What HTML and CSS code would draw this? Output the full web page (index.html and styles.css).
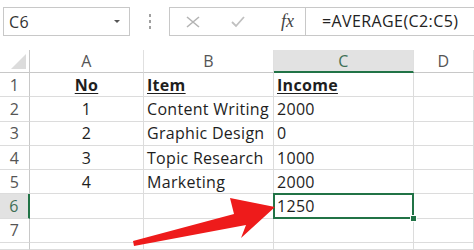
FILE: index.html
```html
<!DOCTYPE html>
<html lang="en">
<head>
  <meta charset="UTF-8">
  <meta name="viewport" content="width=device-width, initial-scale=1.0">
  <title>AVERAGE example</title>
  <link rel="stylesheet" href="styles.css">
</head>
<body>
  <div class="toolbar">
    <div class="name-box">
      <span>C6</span>
      <span class="caret"></span>
    </div>
    <div class="dots"><i></i><i></i><i></i></div>
    <div class="formula-wrap">
      <div class="buttons">
        <svg class="btn-x" width="16" height="12" viewBox="0 0 16 12">
          <path d="M2 1 L14 11 M14 1 L2 11" stroke="#b4b4b4" stroke-width="1.6" fill="none"/>
        </svg>
        <svg class="btn-ok" width="14" height="12" viewBox="0 0 14 12">
          <path d="M1 6 L5 10 L13 1" stroke="#c0c0c0" stroke-width="1.8" fill="none"/>
        </svg>
        <span class="fx">fx</span>
      </div>
      <div class="formula">=AVERAGE(C2:C5)</div>
    </div>
  </div>

  <div class="sheet">
    <div class="corner"><span class="tri"></span></div>
    <div class="col-head">A</div>
    <div class="col-head">B</div>
    <div class="col-head selected">C</div>
    <div class="col-head">D</div>

    <div class="row-head">1</div>
    <div class="cell center head">No</div>
    <div class="cell head">Item</div>
    <div class="cell head">Income</div>
    <div class="cell"></div>

    <div class="row-head">2</div>
    <div class="cell center">1</div>
    <div class="cell">Content Writing</div>
    <div class="cell">2000</div>
    <div class="cell"></div>

    <div class="row-head">3</div>
    <div class="cell center">2</div>
    <div class="cell">Graphic Design</div>
    <div class="cell">0</div>
    <div class="cell"></div>

    <div class="row-head">4</div>
    <div class="cell center">3</div>
    <div class="cell">Topic Research</div>
    <div class="cell">1000</div>
    <div class="cell"></div>

    <div class="row-head">5</div>
    <div class="cell center">4</div>
    <div class="cell">Marketing</div>
    <div class="cell">2000</div>
    <div class="cell"></div>

    <div class="row-head selected">6</div>
    <div class="cell"></div>
    <div class="cell"></div>
    <div class="cell active">1250<span class="handle"></span></div>
    <div class="cell"></div>

    <div class="row-head">7</div>
    <div class="cell"></div>
    <div class="cell"></div>
    <div class="cell"></div>
    <div class="cell"></div>

    <div class="row-head"></div>
    <div class="cell"></div>
    <div class="cell"></div>
    <div class="cell"></div>
    <div class="cell"></div>
  </div>

  <svg class="arrow" width="160" height="56" viewBox="0 0 160 56">
    <path d="M142 13 L97 4 L101 20 L0 47 L1 52 L113 31 L108 44 Z" fill="#ee1b1b"/>
  </svg>
</body>
</html>
```

FILE: styles.css
```css
body {
  margin: 0;
  font-family: "Open Sans", "Liberation Sans", sans-serif;
  background: #fff;
  color: #222;
  overflow: hidden;
  position: relative;
  width: 474px;
  height: 250px;
}
.toolbar {
  display: flex;
  align-items: flex-start;
  height: 50px;
  padding-top: 7px;
  box-sizing: border-box;
}
.name-box {
  margin-left: 3px;
  width: 127px;
  height: 29px;
  border: 1px solid #c8c8c8;
  box-sizing: border-box;
  display: flex;
  align-items: center;
  justify-content: space-between;
  padding: 0 9px 0 5px;
  font-size: 16px;
  letter-spacing: 0.3px;
  color: #333;
}
.caret {
  width: 0;
  height: 0;
  border-left: 3px solid transparent;
  border-right: 3px solid transparent;
  border-top: 3px solid #555;
}
.dots {
  width: 39px;
  display: flex;
  flex-direction: column;
  align-items: center;
  gap: 3px;
  padding-top: 7px;
}
.dots i {
  width: 2px;
  height: 3px;
  background: #a0a0a0;
}
.formula-wrap {
  flex: 1;
  display: flex;
  height: 29px;
  border: 1px solid #c8c8c8;
  border-right: none;
  box-sizing: border-box;
}
.buttons {
  width: 136px;
  display: flex;
  align-items: center;
  border-right: 1px solid #c8c8c8;
  box-sizing: border-box;
}
.btn-x { margin-left: 15px; }
.btn-ok { margin-left: 30px; }
.fx {
  margin-left: 36px;
  font-family: "Liberation Serif", serif;
  font-style: italic;
  font-size: 18px;
  color: #444;
}
.formula {
  padding-left: 16px;
  font-size: 16px;
  letter-spacing: 0.4px;
  line-height: 27px;
  color: #222;
}
.sheet {
  display: grid;
  grid-template-columns: 30px 114px 130px 140px 60px;
  grid-template-rows: 23px repeat(7, 24.3px) 7px;
}
.sheet > div {
  box-sizing: border-box;
  border-right: 1px solid #dcdcdc;
  border-bottom: 1px solid #dcdcdc;
  font-size: 16px;
  letter-spacing: 0.3px;
  display: flex;
  align-items: center;
  white-space: nowrap;
}
.corner {
  position: relative;
  border-right-color: #c8c8c8 !important;
  border-bottom-color: #c8c8c8 !important;
}
.tri {
  position: absolute;
  right: 3px;
  bottom: 3px;
  width: 0;
  height: 0;
  border-left: 15px solid transparent;
  border-bottom: 15px solid #dcdcdc;
}
.col-head {
  justify-content: center;
  color: #555;
  border-bottom-color: #c8c8c8 !important;
  border-right-color: #e0e0e0 !important;
}
.col-head.selected {
  background: #e2e2e2;
  color: #3f6f55;
  border-bottom: 2px solid #217346 !important;
}
.row-head {
  justify-content: center;
  color: #555;
  border-right-color: #c8c8c8 !important;
}
.row-head.selected {
  background: #e2e2e2;
  color: #3f6f55;
  border-right: 2px solid #217346 !important;
}
.cell {
  padding-left: 3px;
  color: #1e1e1e;
}
.cell.center {
  justify-content: center;
  padding-left: 0;
}
.cell.head {
  font-weight: bold;
  text-decoration: underline;
  text-underline-offset: 2px;
}
.cell.active {
  position: relative;
}
.cell.active::before {
  content: "";
  position: absolute;
  left: -1px;
  top: -1px;
  right: -1px;
  bottom: -1px;
  border: 2px solid #217346;
}
.handle {
  position: absolute;
  right: -4px;
  bottom: -4px;
  width: 5px;
  height: 5px;
  background: #217346;
  border: 1px solid #fff;
}
.arrow {
  position: absolute;
  left: 133px;
  top: 194px;
}
```
